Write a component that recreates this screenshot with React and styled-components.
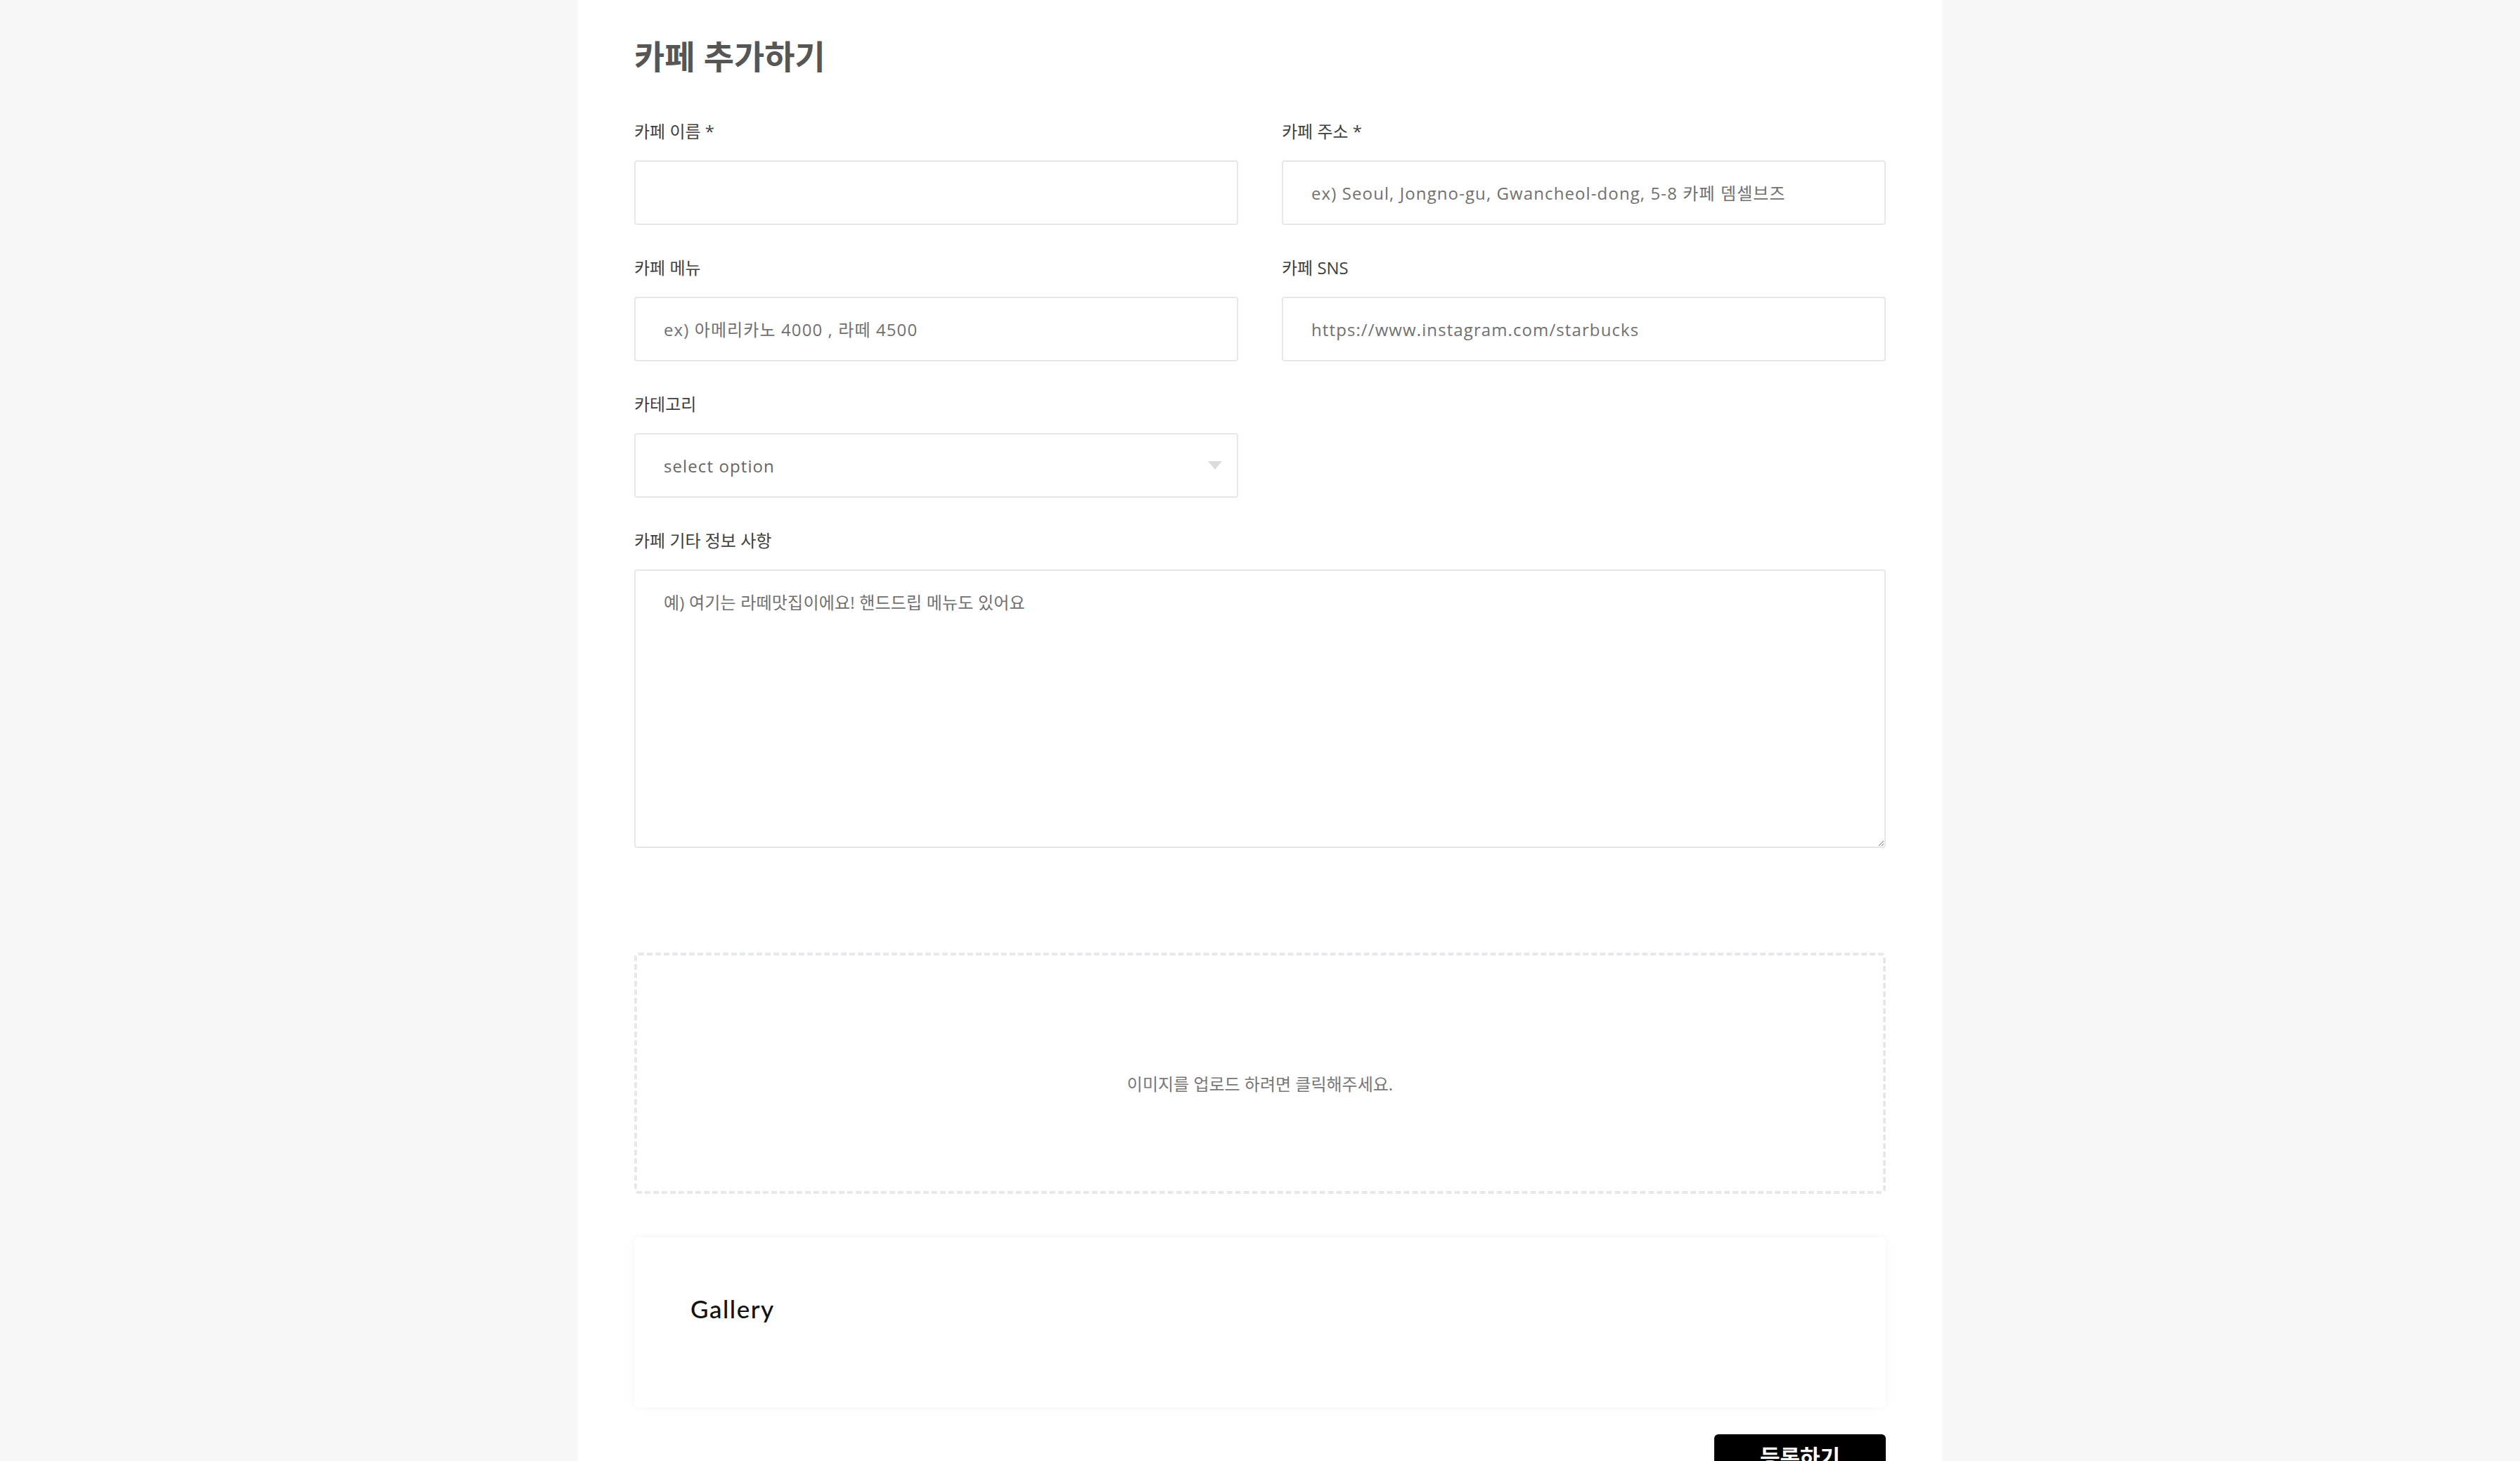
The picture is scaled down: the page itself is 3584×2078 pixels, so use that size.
import React from "react";
import styled, { createGlobalStyle } from "styled-components";

const GlobalStyle = createGlobalStyle`
  html, body {
    margin: 0;
    padding: 0;
    background: #f7f7f7;
  }
  * {
    box-sizing: border-box;
  }
`;

const fontStack = `"Open Sans", "Noto Sans CJK KR", sans-serif`;

export default function App() {
  return (
    <>
      <GlobalStyle />
      <Panel>
        <Title>카페 추가하기</Title>
        <FormGrid>
          <Field>
            <Label>카페 이름 *</Label>
            <TextInput type="text" />
          </Field>
          <Field>
            <Label>카페 주소 *</Label>
            <TextInput
              type="text"
              placeholder="ex) Seoul, Jongno-gu, Gwancheol-dong, 5-8 카페 뎀셀브즈"
            />
          </Field>
          <Field>
            <Label>카페 메뉴</Label>
            <TextInput type="text" placeholder="ex) 아메리카노 4000 , 라떼 4500" />
          </Field>
          <Field>
            <Label>카페 SNS</Label>
            <TextInput
              type="text"
              placeholder="https://www.instagram.com/starbucks"
            />
          </Field>
          <Field>
            <Label>카테고리</Label>
            <SelectWrap>
              <Select defaultValue="">
                <option value="">select option</option>
                <option value="cafe">카페</option>
                <option value="dessert">디저트</option>
              </Select>
            </SelectWrap>
          </Field>
          <Field $wide>
            <Label>카페 기타 정보 사항</Label>
            <TextArea placeholder="예) 여기는 라떼맛집이에요! 핸드드립 메뉴도 있어요" />
          </Field>
        </FormGrid>

        <DropZone>이미지를 업로드 하려면 클릭해주세요.</DropZone>

        <GalleryCard>
          <GalleryTitle>Gallery</GalleryTitle>
        </GalleryCard>

        <Actions>
          <SubmitButton type="button">등록하기</SubmitButton>
        </Actions>
      </Panel>
    </>
  );
}

const Panel = styled.div`
  width: 1940px;
  min-height: 100vh;
  margin: 0 auto;
  padding: 52px 80px 40px;
  background: #ffffff;
  font-family: ${fontStack};
`;

const Title = styled.h1`
  margin: 0;
  font-size: 47px;
  line-height: 1.2;
  font-weight: 700;
  color: #565656;
`;

const FormGrid = styled.div`
  display: grid;
  grid-template-columns: 1fr 1fr;
  column-gap: 62px;
  row-gap: 44px;
  margin-top: 62px;
`;

const Field = styled.div`
  display: flex;
  flex-direction: column;
  gap: 25px;
  grid-column: ${(p) => (p.$wide ? "1 / -1" : "auto")};
`;

const Label = styled.label`
  font-size: 24px;
  line-height: 33px;
  font-weight: 400;
  color: #3f3f3f;
`;

const fieldBase = `
  width: 100%;
  border: 2px solid #e5e8e9;
  border-radius: 4px;
  background: #ffffff;
  font-family: ${fontStack};
  font-size: 24px;
  color: #555555;
  outline: none;
  &::placeholder {
    color: #707070;
  }
`;

const TextInput = styled.input`
  ${fieldBase}
  height: 92px;
  padding: 0 40px;
  letter-spacing: 1.1px;
`;

const SelectWrap = styled.div`
  position: relative;

  &::after {
    content: "";
    position: absolute;
    right: 23px;
    top: 50%;
    transform: translateY(-50%);
    border-left: 10px solid transparent;
    border-right: 10px solid transparent;
    border-top: 12px solid #dcdcdc;
    pointer-events: none;
  }
`;

const Select = styled.select`
  ${fieldBase}
  height: 92px;
  padding: 0 40px;
  letter-spacing: 1.1px;
  appearance: none;
  -webkit-appearance: none;
  color: #666666;
`;

const TextArea = styled.textarea`
  ${fieldBase}
  height: 396px;
  padding: 27px 40px;
  line-height: 1.5;
  letter-spacing: 0.2px;
  resize: vertical;
`;

const DropZone = styled.div`
  height: 343px;
  margin-top: 149px;
  padding-top: 28px;
  display: flex;
  align-items: center;
  justify-content: center;
  border: 4px dashed #e6e9eb;
  border-radius: 6px;
  font-size: 24px;
  color: #777777;
  cursor: pointer;
`;

const GalleryCard = styled.div`
  height: 242px;
  margin-top: 62px;
  padding: 80px;
  border-radius: 6px;
  background: #ffffff;
  box-shadow: 0 0 12px rgba(0, 0, 0, 0.05);
`;

const GalleryTitle = styled.h3`
  margin: 0;
  font-family: "Lato", sans-serif;
  font-size: 35px;
  line-height: 1.2;
  font-weight: 500;
  letter-spacing: 1.5px;
  color: #111111;
`;

const Actions = styled.div`
  display: flex;
  justify-content: flex-end;
  margin-top: 38px;
`;

const SubmitButton = styled.button`
  width: 244px;
  padding: 14px 0;
  border: none;
  border-radius: 6px;
  background: #000000;
  color: #ffffff;
  font-family: ${fontStack};
  font-size: 31px;
  line-height: 1.2;
  font-weight: 700;
  cursor: pointer;
`;
